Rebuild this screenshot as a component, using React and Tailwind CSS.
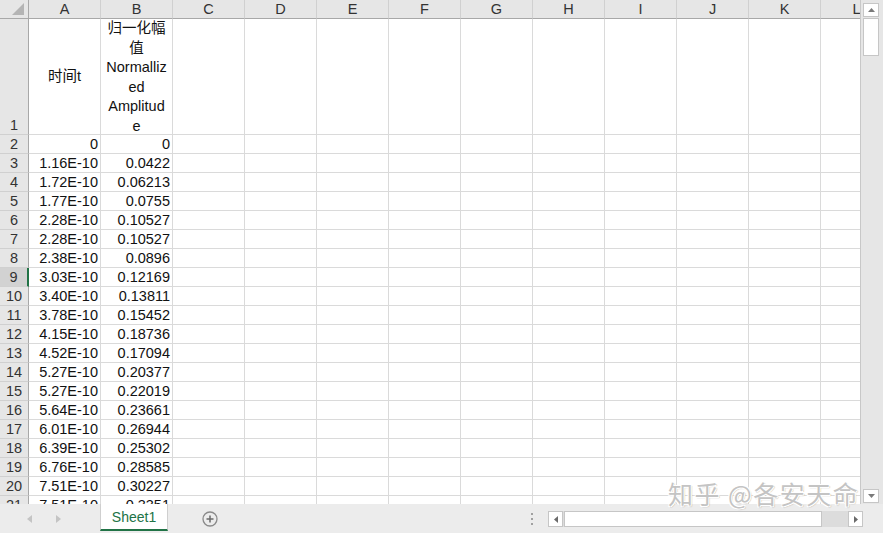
import React from "react";

const data = [
  ["0", "0"],
  ["1.16E-10", "0.0422"],
  ["1.72E-10", "0.06213"],
  ["1.77E-10", "0.0755"],
  ["2.28E-10", "0.10527"],
  ["2.28E-10", "0.10527"],
  ["2.38E-10", "0.0896"],
  ["3.03E-10", "0.12169"],
  ["3.40E-10", "0.13811"],
  ["3.78E-10", "0.15452"],
  ["4.15E-10", "0.18736"],
  ["4.52E-10", "0.17094"],
  ["5.27E-10", "0.20377"],
  ["5.27E-10", "0.22019"],
  ["5.64E-10", "0.23661"],
  ["6.01E-10", "0.26944"],
  ["6.39E-10", "0.25302"],
  ["6.76E-10", "0.28585"],
  ["7.51E-10", "0.30227"],
  ["7.51E-10", "0.3351"],
];

const cols = ["A", "B", "C", "D", "E", "F", "G", "H", "I", "J", "K", "L"];

const font = { fontFamily: '"Liberation Sans", "Noto Sans CJK SC", sans-serif' };

function Cell({ children, className = "" }) {
  return (
    <div className={"border-r border-b border-[#dadada] bg-white text-[#111] overflow-hidden whitespace-nowrap " + className}>
      {children}
    </div>
  );
}

export default function App() {
  return (
    <div className="relative w-[883px] h-[533px] overflow-hidden bg-[#e6e6e6] flex flex-col text-[14.5px]" style={font}>
      <div className="flex h-[504px]">
        <div className="w-[861px] h-[504px] overflow-hidden bg-white border-r border-[#c8c8c8]">
          <div className="grid grid-cols-[29px_repeat(12,72px)] grid-rows-[19px_116px_repeat(20,19px)] w-[893px]">
            {/* corner */}
            <div className="bg-[#e6e6e6] border-r border-b border-[#a8a8a8] flex items-end justify-end pr-[4px] pb-[3px]">
              <svg width="12" height="12" viewBox="0 0 12 12">
                <polygon points="12,0 12,12 0,12" fill="#b4b4b4" />
              </svg>
            </div>
            {cols.map((c) => (
              <div key={c} className="bg-[#e6e6e6] border-r border-[#d0d0d0] border-b border-b-[#a8a8a8] flex items-center justify-center text-[#333] leading-none">
                {c}
              </div>
            ))}
            {/* row 1 */}
            <div className="bg-[#e6e6e6] border-r border-r-[#a8a8a8] border-b border-[#d0d0d0] flex items-end justify-center text-[#333] leading-none pb-[2px]">1</div>
            <Cell className="flex items-center justify-center">时间t</Cell>
            <Cell className="flex flex-col items-center justify-center leading-[19.5px] pt-[2px]">
              <span>归一化幅</span>
              <span>值</span>
              <span>Normalliz</span>
              <span>ed</span>
              <span>Amplitud</span>
              <span>e</span>
            </Cell>
            {cols.slice(2).map((c) => (
              <Cell key={"r1" + c} />
            ))}
            {data.map((row, i) => {
              const n = i + 2;
              const sel = n === 9;
              return (
                <React.Fragment key={n}>
                  <div
                    className={
                      "border-b border-[#d0d0d0] flex items-center justify-center text-[#333] leading-none border-r " +
                      (sel ? "bg-[#d2d2d2] border-r-2 border-r-[#217346]" : "bg-[#e6e6e6] border-r-[#a8a8a8]")
                    }
                  >
                    {n}
                  </div>
                  <Cell className="flex items-center justify-end pr-[2px] leading-none">{row[0]}</Cell>
                  <Cell className="flex items-center justify-end pr-[2px] leading-none">{row[1]}</Cell>
                  {cols.slice(2).map((c) => (
                    <Cell key={n + c} />
                  ))}
                </React.Fragment>
              );
            })}
          </div>
        </div>
        {/* vertical scrollbar */}
        <div className="w-[22px] h-[504px] bg-[#e6e6e6] flex flex-col pl-[2px] pr-[4px] pt-[3px] pb-[1px]">
          <div className="h-[14px] bg-white border border-[#c6c6c6] flex items-center justify-center">
            <svg width="7" height="4" viewBox="0 0 7 4"><polygon points="3.5,0 7,4 0,4" fill="#7a7a7a" /></svg>
          </div>
          <div className="h-[38px] mt-[1px] bg-white border border-[#c6c6c6]" />
          <div className="flex-1" />
          <div className="h-[14px] bg-white border border-[#c6c6c6] flex items-center justify-center">
            <svg width="7" height="4" viewBox="0 0 7 4"><polygon points="0,0 7,0 3.5,4" fill="#7a7a7a" /></svg>
          </div>
        </div>
      </div>
      {/* bottom bar */}
      <div className="h-[29px] flex items-start bg-[#ececec]">
        <div className="w-[100px] h-[29px] flex items-center">
          <svg className="ml-[27px]" width="5" height="8" viewBox="0 0 5 8"><polygon points="5,0 5,8 0,4" fill="#c4c4c4" /></svg>
          <svg className="ml-[24px]" width="5" height="8" viewBox="0 0 5 8"><polygon points="0,0 0,8 5,4" fill="#c4c4c4" /></svg>
        </div>
        <div className="w-[68px] h-[27px] bg-white border-x border-[#cfcfcf] border-b-2 border-b-[#217346] flex items-center justify-center text-[#217346] text-[14px] leading-none">
          Sheet1
        </div>
        <div className="ml-[34px] h-[29px] flex items-center">
          <svg width="16" height="16" viewBox="0 0 16 16">
            <circle cx="8" cy="8" r="7" fill="none" stroke="#8a8a8a" strokeWidth="1.3" />
            <line x1="4.5" y1="8" x2="11.5" y2="8" stroke="#6a6a6a" strokeWidth="1.5" />
            <line x1="8" y1="4.5" x2="8" y2="11.5" stroke="#6a6a6a" strokeWidth="1.5" />
          </svg>
        </div>
        <div className="ml-[313px] h-[29px] flex flex-col items-center justify-center gap-[3px]">
          <div className="w-[2px] h-[2px] bg-[#a0a0a0]" />
          <div className="w-[2px] h-[2px] bg-[#a0a0a0]" />
          <div className="w-[2px] h-[2px] bg-[#a0a0a0]" />
        </div>
        <div className="ml-[15px] mt-[7px] w-[315px] h-[16px] flex bg-[#dcdcdc]">
          <div className="w-[15px] h-[16px] bg-white border border-[#c6c6c6] flex items-center justify-center">
            <svg width="4" height="7" viewBox="0 0 4 7"><polygon points="4,0 4,7 0,3.5" fill="#6a6a6a" /></svg>
          </div>
          <div className="w-[258px] h-[16px] ml-[1px] bg-white border border-[#c6c6c6]" />
          <div className="flex-1" />
          <div className="w-[15px] h-[16px] bg-white border border-[#c6c6c6] flex items-center justify-center">
            <svg width="4" height="7" viewBox="0 0 4 7"><polygon points="0,0 0,7 4,3.5" fill="#6a6a6a" /></svg>
          </div>
        </div>
      </div>
      {/* watermark */}
      <div
        className="absolute left-[668px] top-[481px] text-[25px] tracking-[1.5px] leading-none text-[#c4c4c4] whitespace-nowrap"
        style={{ fontFamily: '"Noto Sans CJK SC", sans-serif', textShadow: "1px 1px 0 #fff, -1px -1px 0 #fff, 1px -1px 0 #fff, -1px 1px 0 #fff, 1px 1px 1px rgba(0,0,0,0.45)" }}
      >
        知乎 @各安天命
      </div>
    </div>
  );
}
